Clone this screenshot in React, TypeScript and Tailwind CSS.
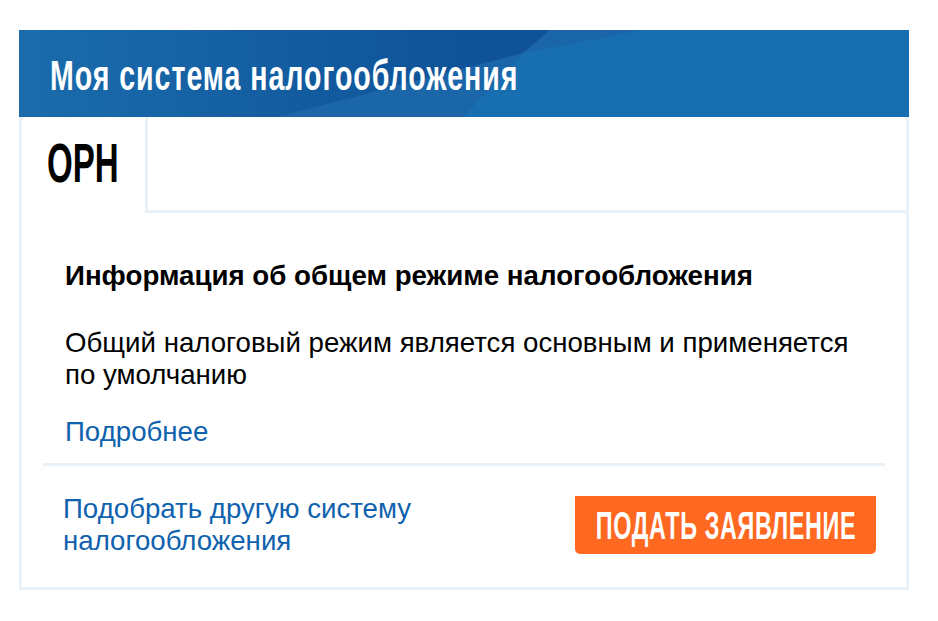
const sans = { fontFamily: '"Liberation Sans", Arial, sans-serif' };

export default function App() {
    return (
        <div className="min-h-[621px] w-[938px] overflow-hidden bg-white pl-[19px] pt-[30px]" style={sans}>
            <div className="w-[890px]">
                {/* Шапка */}
                <div className="relative flex h-[87px] items-center overflow-hidden bg-[#176eb0] pl-[31px] pt-[4px]">
                    <svg className="absolute inset-0 h-full w-full" viewBox="0 0 890 87" preserveAspectRatio="none">
                        <defs>
                            <linearGradient id="hdr" x1="0" x2="531" y1="0" y2="0" gradientUnits="userSpaceOnUse">
                                <stop offset="0" stopColor="#1a6cad" />
                                <stop offset="0.85" stopColor="#0f5298" />
                            </linearGradient>
                        </defs>
                        <polygon points="0,0 624,0 505,23 444,87 0,87" fill="#1a66a9" />
                        <polygon points="0,0 531,0 504,23 258,87 0,87" fill="url(#hdr)" />
                    </svg>
                    <h1 className="relative origin-left scale-x-[0.68] text-[42px] leading-none font-bold tracking-[1.4px] whitespace-nowrap text-white">
                        Моя система налогообложения
                    </h1>
                </div>

                <div className="border-x-[3px] border-b-[3px] border-[#e8f0f8]">
                    {/* Вкладки */}
                    <div className="flex h-[96px]">
                        <div className="w-[123px] pl-[25px] pt-[18px] text-[56px] leading-none font-bold text-black">
                            <span className="inline-block origin-left scale-x-[0.59]">ОРН</span>
                        </div>
                        <div className="flex-1 border-b-[3px] border-l-[3px] border-[#e8f0f8]" />
                    </div>

                    {/* Описание */}
                    <div className="px-[43px] pt-[48px] text-[27.65px] text-black">
                        <h2 className="text-[27.7px] leading-[29px] font-bold">Информация об общем режиме налогообложения</h2>
                        <p className="mt-[37px] leading-[32px]">
                            Общий налоговый режим является основным и применяется по умолчанию
                        </p>
                        <a className="mt-[25px] block leading-[32px] text-[#0f62ae]">Подробнее</a>
                    </div>

                    {/* Низ карточки */}
                    <div className="mx-[21px] mt-[15px] flex h-[124px] items-start justify-between border-t-[3px] border-[#e8f0f8] pr-[9px] pl-[20px]">
                        <a className="mt-[27px] w-[400px] text-[27.65px] leading-[32px] text-[#0f62ae]">
                            Подобрать другую систему налогообложения
                        </a>
                        <button className="mt-[30px] flex h-[58px] w-[301px] items-center justify-center rounded-b-[5px] bg-[#ff6820] text-[39px] leading-none font-bold text-white">
                            <span className="shrink-0 scale-x-[0.6] tracking-[1px] whitespace-nowrap">ПОДАТЬ ЗАЯВЛЕНИЕ</span>
                        </button>
                    </div>
                </div>
            </div>
        </div>
    );
}
